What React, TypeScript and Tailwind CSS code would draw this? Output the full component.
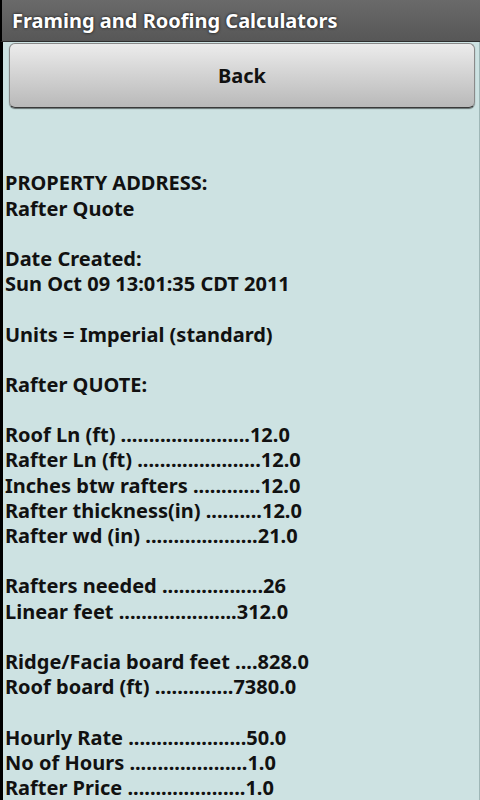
const rows: (string | null)[] = [
  null,
  null,
  'PROPERTY ADDRESS:',
  'Rafter Quote',
  null,
  'Date Created:',
  'Sun Oct 09 13:01:35 CDT 2011',
  null,
  'Units = Imperial (standard)',
  null,
  'Rafter QUOTE:',
  null,
  'Roof Ln (ft) .......................12.0',
  'Rafter Ln (ft) ......................12.0',
  'Inches btw rafters ............12.0',
  'Rafter thickness(in) ..........12.0',
  'Rafter wd (in) ....................21.0',
  null,
  'Rafters needed ..................26',
  'Linear feet .....................312.0',
  null,
  'Ridge/Facia board feet ....828.0',
  'Roof board (ft) ..............7380.0',
  null,
  'Hourly Rate .....................50.0',
  'No of Hours .....................1.0',
  'Rafter Price .....................1.0',
];

export default function App() {
  return (
    <div className="w-[480px] h-[800px] overflow-hidden bg-[#cde2e2] flex flex-col" style={{ fontFamily: '"Noto Sans", "Open Sans", sans-serif' }}>
      {/* title bar */}
      <div className="h-[42px] shrink-0 flex items-center pl-[10px] border-l-2 border-black border-b border-b-[#2e2e2e] bg-gradient-to-b from-[#6a6a6a] to-[#575757]">
        <span className="text-white font-bold text-[20px] leading-none [text-shadow:0_0_3px_rgba(0,0,0,0.9)]">
          Framing and Roofing Calculators
        </span>
      </div>

      <div className="flex-1 flex flex-col border-l-[3px] border-black border-r border-r-[#9fb7b7]">
        <div className="pt-[1px] pl-[6px] pr-[4px]">
          <button className="w-full h-[65px] rounded-[6px] border border-[#8a8a8a] border-b-[#3a3a3a] bg-gradient-to-b from-[#ececec] via-[#d2d2d2] to-[#b9b9b9] text-[#111] font-bold text-[20px] shadow-[0_1px_1px_rgba(0,0,0,0.5)]">
            Back
          </button>
        </div>

        <div className="pl-[2px] pt-[12px] text-[#111] font-bold text-[20px] leading-[25.2px] whitespace-pre">
          {rows.map((r, i) => (
            <div key={i} className="h-[25.2px]">{r ?? ' '}</div>
          ))}
        </div>
      </div>
    </div>
  );
}
